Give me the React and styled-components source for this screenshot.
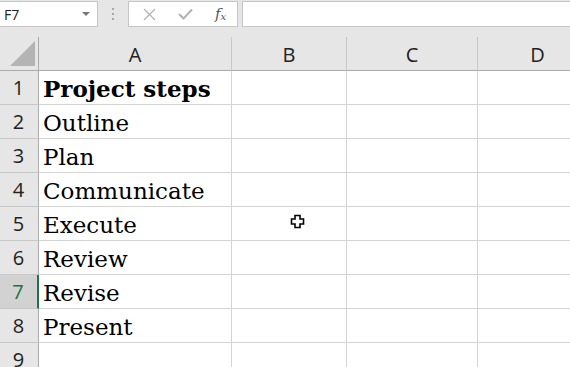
import React from 'react';
import styled, { createGlobalStyle } from 'styled-components';

const GlobalStyle = createGlobalStyle`
  html, body {
    margin: 0;
    padding: 0;
    background: #e6e6e6;
    overflow: hidden;
  }
  * { box-sizing: border-box; }
`;

const columns = [
  { label: 'A', width: 193 },
  { label: 'B', width: 115 },
  { label: 'C', width: 131 },
  { label: 'D', width: 120 },
];

const rows = [
  { text: 'Project steps', bold: true },
  { text: 'Outline' },
  { text: 'Plan' },
  { text: 'Communicate' },
  { text: 'Execute' },
  { text: 'Review' },
  { text: 'Revise' },
  { text: 'Present' },
  { text: '' },
];

const SELECTED_ROW = 7;

function App() {
  const template = `39px ${columns.map((c) => c.width + 'px').join(' ')}`;

  return (
    <>
      <GlobalStyle />
      <Window>
        <FormulaBar>
          <NameBox>
            <span>F7</span>
            <Caret />
          </NameBox>
          <Grip>
            <i /><i /><i />
          </Grip>
          <Buttons>
            <ToolGlyph>
              <svg width="13" height="13" viewBox="0 0 13 13">
                <path d="M1 1 L12 12 M12 1 L1 12" stroke="#b3b3b3" strokeWidth="1.3" fill="none" />
              </svg>
            </ToolGlyph>
            <ToolGlyph>
              <svg width="15" height="12" viewBox="0 0 15 12">
                <path d="M1 6 L5.5 10.5 L14 1.5" stroke="#b3b3b3" strokeWidth="2" fill="none" />
              </svg>
            </ToolGlyph>
            <Fx>
              f<sub>x</sub>
            </Fx>
          </Buttons>
          <Input />
        </FormulaBar>

        <Sheet style={{ gridTemplateColumns: template }}>
          <Corner>
            <svg width="27" height="27" viewBox="0 0 27 27">
              <polygon points="26,1 26,26 1,26" fill="#b4b4b4" />
            </svg>
          </Corner>
          {columns.map((c) => (
            <ColHead key={c.label}>{c.label}</ColHead>
          ))}
          {rows.map((r, i) => {
            const n = i + 1;
            return (
              <React.Fragment key={n}>
                <RowHead $selected={n === SELECTED_ROW}>{n}</RowHead>
                <Cell $bold={r.bold}>{r.text}</Cell>
                <Cell />
                <Cell />
                <Cell />
              </React.Fragment>
            );
          })}
          <Pointer>
            <svg width="15" height="15" viewBox="0 0 15 15">
              <path
                d="M5 1.5 H10 V5 H13.5 V10 H10 V13.5 H5 V10 H1.5 V5 H5 Z"
                fill="#fff"
                stroke="#000"
                strokeWidth="1.6"
                strokeLinejoin="miter"
              />
            </svg>
          </Pointer>
        </Sheet>
      </Window>
    </>
  );
}

const Window = styled.div`
  width: 570px;
  height: 367px;
  overflow: hidden;
  background: #e6e6e6;
  font-family: 'Open Sans', 'Noto Sans', sans-serif;
`;

const FormulaBar = styled.div`
  display: flex;
  height: 37px;
  padding-bottom: 10px;
  padding-top: 1px;
  align-items: stretch;
`;

const NameBox = styled.div`
  width: 98px;
  background: #fff;
  border: 1px solid #c6c6c6;
  border-left: none;
  display: flex;
  align-items: center;
  justify-content: space-between;
  padding: 0 7px 0 4px;
  font-size: 14px;
  color: #222;
`;

const Caret = styled.span`
  width: 0;
  height: 0;
  border-left: 4px solid transparent;
  border-right: 4px solid transparent;
  border-top: 4px solid #777;
`;

const Grip = styled.div`
  width: 30px;
  display: flex;
  flex-direction: column;
  align-items: center;
  justify-content: center;
  gap: 3px;
  i {
    width: 2px;
    height: 2px;
    background: #a8a8a8;
  }
`;

const Buttons = styled.div`
  width: 110px;
  background: #fff;
  border: 1px solid #c6c6c6;
  display: flex;
  align-items: center;
  padding-left: 14px;
  gap: 22px;
`;

const ToolGlyph = styled.span`
  display: flex;
  align-items: center;
`;

const Fx = styled.span`
  font-family: 'DejaVu Serif', serif;
  font-style: italic;
  font-size: 15px;
  color: #555;
  sub {
    font-size: 10px;
    vertical-align: -1px;
  }
`;

const Input = styled.div`
  flex: 1;
  margin-left: 4px;
  background: #fff;
  border: 1px solid #c6c6c6;
  border-right: none;
`;

const Sheet = styled.div`
  position: relative;
  display: grid;
  grid-auto-rows: 34px;
  grid-template-rows: 34px;
`;

const Corner = styled.div`
  background: #e6e6e6;
  border-right: 1px solid #ababab;
  border-bottom: 1px solid #ababab;
  display: flex;
  align-items: flex-start;
  justify-content: flex-end;
  padding: 3px 2px 0 0;
`;

const ColHead = styled.div`
  background: #e6e6e6;
  border-right: 1px solid #c8c8c8;
  border-bottom: 1px solid #ababab;
  display: flex;
  align-items: center;
  justify-content: center;
  font-size: 20px;
  color: #222;
  padding-top: 1px;
`;

const RowHead = styled.div`
  background: ${(p) => (p.$selected ? '#d2d2d2' : '#e6e6e6')};
  border-right: ${(p) => (p.$selected ? '2px solid #217346' : '1px solid #ababab')};
  border-bottom: 1px solid #c8c8c8;
  display: flex;
  align-items: center;
  justify-content: center;
  font-size: 20px;
  color: ${(p) => (p.$selected ? '#217346' : '#222')};
  padding-right: 1px;
`;

const Cell = styled.div`
  background: #fff;
  border-right: 1px solid #d4d4d4;
  border-bottom: 1px solid #d4d4d4;
  display: flex;
  align-items: flex-end;
  padding: 0 0 2px 4px;
  font-family: 'DejaVu Serif', serif;
  font-size: 23px;
  font-weight: ${(p) => (p.$bold ? 700 : 400)};
  color: #000;
  white-space: nowrap;
  overflow: visible;
`;

const Pointer = styled.div`
  position: absolute;
  left: 290px;
  top: 177px;
  line-height: 0;
`;

export default App;
